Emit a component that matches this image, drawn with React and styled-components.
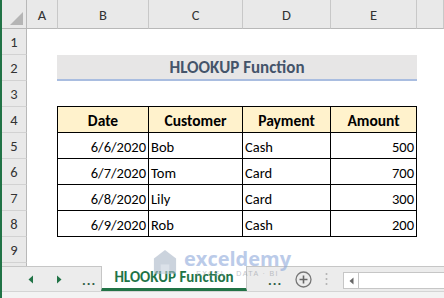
import React from "react";
import styled, { createGlobalStyle } from "styled-components";

const GlobalStyle = createGlobalStyle`
  html, body {
    margin: 0;
    padding: 0;
    background: #fff;
    overflow: hidden;
  }
  body {
    font-family: "Carlito", "Lato", "Liberation Sans", sans-serif;
  }
`;

const Frame = styled.div`
  position: relative;
  width: 444px;
  height: 298px;
  box-sizing: border-box;
  border-left: 2px solid #217346;
  display: flex;
  flex-direction: column;
  overflow: hidden;
  background: #fff;
`;

const Sheet = styled.div`
  flex: 1;
  display: grid;
  grid-template-columns: 25px 31px 91px 94px 88px 86px 1fr;
  grid-template-rows: 29px repeat(10, 26px);
  overflow: hidden;
`;

const Corner = styled.div`
  background: #e9e9e9;
  border-right: 1px solid #b8b8b8;
  border-bottom: 1px solid #b8b8b8;
  display: flex;
  align-items: flex-end;
  justify-content: flex-end;
  padding: 0 3px 3px 0;
`;

const ColHeader = styled.div`
  background: #e9e9e9;
  border-right: 1px solid #c8c8c8;
  border-bottom: 1px solid #b8b8b8;
  display: flex;
  align-items: center;
  justify-content: center;
  font-size: 14.5px;
  color: #333;
  padding-top: 2px;
`;

const RowHeader = styled.div`
  grid-column: 1;
  grid-row: ${(p) => p.$row + 1};
  background: #e9e9e9;
  border-right: 1px solid #b8b8b8;
  border-bottom: 1px solid #d2d2d2;
  display: flex;
  align-items: center;
  justify-content: center;
  font-size: 14.5px;
  color: #333;
`;

const Title = styled.div`
  grid-column: 3 / 7;
  grid-row: 3;
  margin-left: -1px;
  background: #e7e6e6;
  border-bottom: 2px solid #a9bde0;
  display: flex;
  align-items: center;
  justify-content: center;
  font-weight: 700;
  font-size: 17px;
  color: #44546a;
`;

const Cell = styled.div`
  grid-column: ${(p) => p.$col + 3};
  grid-row: ${(p) => p.$row + 1};
  border-right: 1px solid #000;
  border-bottom: 1px solid #000;
  border-left: ${(p) => (p.$col === 0 ? "1px solid #000" : "none")};
  border-top: ${(p) => (p.$row === 4 ? "1px solid #000" : "none")};
  margin-left: ${(p) => (p.$col === 0 ? "-1px" : "0")};
  margin-top: ${(p) => (p.$row === 4 ? "-1px" : "0")};
  background: ${(p) => (p.$head ? "#fff2cc" : "#fff")};
  display: flex;
  align-items: center;
  justify-content: ${(p) =>
    p.$head ? "center" : p.$align === "right" ? "flex-end" : "flex-start"};
  padding: 2px 2px 0;
  font-size: ${(p) => (p.$head ? "15.5px" : "14.5px")};
  font-weight: ${(p) => (p.$head ? 700 : 400)};
  color: #000;
  white-space: nowrap;
`;

const TabBar = styled.div`
  height: 25px;
  box-sizing: border-box;
  border-top: 1px solid #c6c6c6;
  background: #ececec;
  display: flex;
  align-items: stretch;
`;

const NavArea = styled.div`
  width: 99px;
  display: flex;
  align-items: center;
  padding-left: 24px;
  gap: 18px;
  box-sizing: border-box;
`;

const NavButton = styled.div`
  width: 10px;
  display: flex;
  justify-content: center;
  align-items: center;
  color: #217346;
`;

const Dots = styled.div`
  font-size: 14px;
  font-weight: 700;
  color: ${(p) => p.$color || "#217346"};
  letter-spacing: 1px;
  padding-top: 2px;
  text-align: center;
`;

const ActiveTab = styled.div`
  width: 146px;
  background: #fff;
  border-left: 1px solid #c6c6c6;
  border-right: 1px solid #c6c6c6;
  border-bottom: 3px solid #217346;
  box-sizing: border-box;
  display: flex;
  align-items: center;
  justify-content: center;
  font-weight: 700;
  font-size: 15px;
  color: #217346;
  margin-top: -1px;
`;

const TabTools = styled.div`
  display: flex;
  align-items: center;
  padding-left: 21px;
  gap: 13px;
`;

const Scroll = styled.div`
  flex: 1;
  margin: 5px 0 2px 15px;
  background: #fff;
  border: 1px solid #c6c6c6;
  border-right: none;
  display: flex;
`;

const ScrollArrow = styled.div`
  width: 14px;
  border-right: 1px solid #c6c6c6;
  display: flex;
  align-items: center;
  justify-content: center;
`;

const StatusStrip = styled.div`
  height: 6px;
  background: #f3f3f3;
  border-top: 1px solid #d4d4d4;
`;

const Watermark = styled.div`
  position: absolute;
  left: 149px;
  top: 248px;
  display: flex;
  align-items: flex-start;
  gap: 5px;
  pointer-events: none;
  opacity: 0.6;
`;

const MarkText = styled.div`
  display: flex;
  flex-direction: column;
  align-items: center;
`;

const MarkName = styled.div`
  font-family: "Open Sans", "Liberation Sans", sans-serif;
  font-weight: 700;
  font-size: 20px;
  line-height: 21px;
  color: #8ea9db;
`;

const MarkSub = styled.div`
  font-family: "Liberation Sans", sans-serif;
  font-size: 7px;
  letter-spacing: 1.4px;
  color: #9aa0a8;
  margin-top: 1px;
`;

const columns = ["A", "B", "C", "D", "E", "F"];

const rows = [
  ["6/6/2020", "Bob", "Cash", "500"],
  ["6/7/2020", "Tom", "Card", "700"],
  ["6/8/2020", "Lily", "Card", "300"],
  ["6/9/2020", "Rob", "Cash", "200"],
];

const heads = ["Date", "Customer", "Payment", "Amount"];
const aligns = ["right", "left", "left", "right"];

const Tri = ({ dir }) => (
  <svg width="6" height="9" viewBox="0 0 6 9">
    {dir === "left" ? (
      <polygon points="5,0.5 5,8.5 0.5,4.5" fill="currentColor" />
    ) : (
      <polygon points="1,0.5 1,8.5 5.5,4.5" fill="currentColor" />
    )}
  </svg>
);

export default function App() {
  return (
    <>
      <GlobalStyle />
      <Frame>
        <Sheet>
          <Corner>
            <svg width="13" height="13" viewBox="0 0 13 13">
              <polygon points="13,0 13,13 0,13" fill="#b5b5b5" />
            </svg>
          </Corner>
          {columns.map((c) => (
            <ColHeader key={c}>{c === "F" ? "" : c}</ColHeader>
          ))}
          {Array.from({ length: 10 }, (_, i) => (
            <RowHeader key={i} $row={i + 1}>
              {i < 9 ? i + 1 : ""}
            </RowHeader>
          ))}
          <Title>HLOOKUP Function</Title>
          {heads.map((h, c) => (
            <Cell key={h} $col={c} $row={4} $head>
              {h}
            </Cell>
          ))}
          {rows.map((r, ri) =>
            r.map((v, c) => (
              <Cell key={ri + "-" + c} $col={c} $row={ri + 5} $align={aligns[c]}>
                {v}
              </Cell>
            ))
          )}
        </Sheet>
        <TabBar>
          <NavArea>
            <NavButton>
              <Tri dir="left" />
            </NavButton>
            <NavButton>
              <Tri dir="right" />
            </NavButton>
            <Dots $color="#2f5f45">...</Dots>
          </NavArea>
          <ActiveTab>HLOOKUP Function</ActiveTab>
          <TabTools>
            <Dots $color="#2f5f45">...</Dots>
            <svg width="17" height="17" viewBox="0 0 17 17">
              <circle cx="8.5" cy="8.5" r="7.5" fill="none" stroke="#777" strokeWidth="1.3" />
              <path d="M8.5 4.5v8M4.5 8.5h8" stroke="#666" strokeWidth="1.6" />
            </svg>
            <svg width="3" height="14" viewBox="0 0 3 14">
              <circle cx="1.5" cy="2" r="1" fill="#b0b0b0" />
              <circle cx="1.5" cy="7" r="1" fill="#b0b0b0" />
              <circle cx="1.5" cy="12" r="1" fill="#b0b0b0" />
            </svg>
          </TabTools>
          <Scroll>
            <ScrollArrow>
              <svg width="5" height="8" viewBox="0 0 5 8">
                <polygon points="4.5,0.5 4.5,7.5 0.5,4" fill="#666" />
              </svg>
            </ScrollArrow>
          </Scroll>
        </TabBar>
        <StatusStrip />
        <Watermark>
          <svg width="28" height="27" viewBox="0 0 29 28">
            <path
              d="M3 11 L14.5 2 L26 11 L26 25 Q26 27 24 27 L5 27 Q3 27 3 25 Z"
              fill="#aab6c8"
            />
            <path d="M10 27 L10 17 L19 17 L19 27 Z" fill="#c4cedb" />
          </svg>
          <MarkText>
            <MarkName>exceldemy</MarkName>
            <MarkSub>EXCEL · DATA · BI</MarkSub>
          </MarkText>
        </Watermark>
      </Frame>
    </>
  );
}
